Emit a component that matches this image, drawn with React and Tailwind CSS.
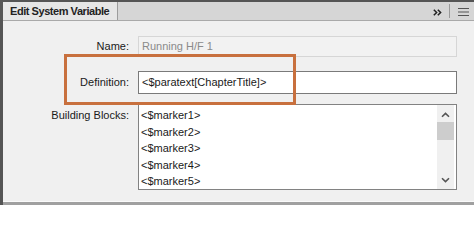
import React from 'react';

const markers = ['<$marker1>', '<$marker2>', '<$marker3>', '<$marker4>', '<$marker5>'];

const Chevron = ({ down }) => (
  <svg width="9" height="6" viewBox="0 0 9 6" className="block">
    <path
      d={down ? 'M1 1.2 L4.5 4.6 L8 1.2' : 'M1 4.8 L4.5 1.4 L8 4.8'}
      fill="none"
      stroke="#555"
      strokeWidth="1.6"
    />
  </svg>
);

export default function App() {
  return (
    <div
      className="w-[474px] h-[205px] bg-[#555] pt-[2px] pl-[3px] overflow-hidden flex flex-col text-[11px] text-[#1a1a1a]"
      style={{ fontFamily: '"Liberation Sans", Arial, sans-serif' }}
    >
      {/* tab bar */}
      <div className="h-[19px] flex bg-[#d6d6d6] border-b border-[#a9a9a9] shrink-0">
        <div className="w-[115px] bg-[#e6e6e6] border-r border-[#9c9c9c] flex items-center pl-[7px] font-bold tracking-[-0.45px] text-[#222]">
          Edit System Variable
        </div>
        <div className="flex-1" />
        <div className="flex items-center pr-[5px]">
          <svg width="9" height="7" viewBox="0 0 9 7" className="mr-[7px] mt-[2px]">
            <path d="M0.8 0.8 L3.6 3.5 L0.8 6.2 M4.8 0.8 L7.6 3.5 L4.8 6.2" fill="none" stroke="#222" strokeWidth="1.5" />
          </svg>
          <div className="w-px h-[14px] bg-[#9a9a9a] mr-[8px]" />
          <svg width="11" height="8" viewBox="0 0 11 8" className="mt-[1px]">
            <path d="M0 0.5 H11 M0 4 H11 M0 7.5 H11" stroke="#555" strokeWidth="1.2" />
          </svg>
        </div>
      </div>

      {/* panel body */}
      <div className="relative flex-1 bg-[#f0f0f0] flex flex-col pt-[15px] pr-[17px]">
        <div className="flex items-center">
          <div className="w-[127px] text-right pr-[1px]">Name:</div>
          <div className="ml-[8px] flex-1 h-[21px] border border-[#d6d6d6] bg-[#f2f2f2] flex items-center pl-[3px] text-[#8a8a8a]">
            Running H/F 1
          </div>
        </div>

        <div className="flex items-center mt-[14px]">
          <div className="w-[127px] text-right pr-[1px]">Definition:</div>
          <div className="ml-[8px] flex-1 h-[23px] border border-[#7a7a7a] bg-white flex items-center pl-[3px]">
            &lt;$paratext[ChapterTitle]&gt;
          </div>
        </div>

        <div className="flex items-start mt-[10px]">
          <div className="w-[127px] text-right pr-[1px] pt-[3px]">Building Blocks:</div>
          <div className="ml-[8px] flex-1 h-[86px] border border-[#828282] bg-white flex">
            <div className="flex-1 flex flex-col pt-[2px] pl-[2px]">
              {markers.map((m) => (
                <div key={m} className="h-[17px] flex items-center">
                  {m}
                </div>
              ))}
            </div>
            <div className="w-[17px] mr-[2px] bg-[#f0f0f0] flex flex-col items-center">
              <div className="h-[17px] flex items-center justify-center pt-[2px]">
                <Chevron />
              </div>
              <div className="w-full h-[18px] bg-[#cdcdcd]" />
              <div className="flex-1" />
              <div className="h-[17px] flex items-center justify-center pb-[2px]">
                <Chevron down />
              </div>
            </div>
          </div>
        </div>

        <div className="flex-1" />
        <div className="h-px bg-[#fafafa] -mr-[17px]" />
        <div className="h-[3px] bg-[#a0a0a0] -mr-[17px]" />

        {/* orange highlight annotation */}
        <div className="absolute left-[61px] top-[33px] w-[232px] h-[51px] border-[3px] border-[#c8703e] pointer-events-none" />
      </div>
    </div>
  );
}
